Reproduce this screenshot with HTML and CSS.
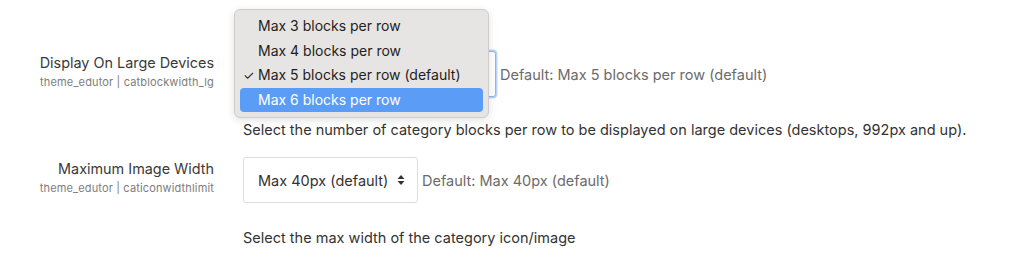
FILE: index.html
```html
<!DOCTYPE html>
<html>
<head>
<meta charset="utf-8">
<link rel="stylesheet" href="styles.css">
</head>
<body>
<div class="page">
  <div class="setting">
    <div class="label">
      <div class="title">Display On Large Devices</div>
      <div class="key">theme_edutor | catblockwidth_lg</div>
    </div>
    <div class="content">
      <div class="control">
        <div class="select select-lg focused"></div>
        <div class="default">Default: Max 5 blocks per row (default)</div>
      </div>
      <div class="desc">Select the number of category blocks per row to be displayed on large devices (desktops, 992px and up).</div>
    </div>
  </div>
  <div class="setting">
    <div class="label">
      <div class="title">Maximum Image Width</div>
      <div class="key">theme_edutor | caticonwidthlimit</div>
    </div>
    <div class="content">
      <div class="control">
        <div class="select select-sm">
          <span>Max 40px (default)</span>
          <svg class="arrows" width="8" height="12" viewBox="0 0 8 12"><path d="M4 1 L7.5 5 H0.5 Z M4 11 L0.5 7 H7.5 Z" fill="#333"/></svg>
        </div>
        <div class="default">Default: Max 40px (default)</div>
      </div>
      <div class="desc desc-2">Select the max width of the category icon/image</div>
    </div>
  </div>
  <div class="menu">
    <div class="item">Max 3 blocks per row</div>
    <div class="item">Max 4 blocks per row</div>
    <div class="item"><span class="check">✓</span>Max 5 blocks per row (default)</div>
    <div class="item active">Max 6 blocks per row</div>
  </div>
</div>
</body>
</html>
```
FILE: styles.css
```css
html, body {
  margin: 0;
  padding: 0;
  background: #fff;
}
.page {
  position: relative;
  width: 1024px;
  height: 265px;
  padding-top: 51px;
  box-sizing: border-box;
  font-family: "Inter", "Liberation Sans", sans-serif;
  color: #333;
}
.setting {
  display: grid;
  grid-template-columns: 214px 1fr;
  column-gap: 29px;
  height: 106px;
}
.label {
  text-align: right;
  padding-top: 2px;
}
.title {
  font-size: 14.4px;
  line-height: 19px;
  color: #3a3a3a;
}
.key {
  font-size: 11px;
  line-height: 14px;
  margin-top: 3px;
  letter-spacing: 0.15px;
  color: #7d7d7d;
}
.content {
  display: flex;
  flex-direction: column;
}
.control {
  display: flex;
  align-items: center;
  gap: 4px;
}
.select {
  box-sizing: border-box;
  height: 46px;
  border: 1px solid #dedede;
  border-radius: 3px;
  background: #fff;
  display: flex;
  align-items: center;
  padding: 0 12px 0 14px;
  font-size: 14.5px;
  color: #333;
}
.select-lg {
  width: 253px;
}
.select.focused {
  border-color: #8db6f5;
  box-shadow: 0 0 0 1.5px #bcd6fb;
}
.select-sm {
  width: 175px;
  justify-content: space-between;
}
.arrows {
  display: block;
}
.default {
  font-size: 14.5px;
  color: #6b6b6b;
}
.desc {
  margin-top: 24px;
  font-size: 14.5px;
  line-height: 18px;
  color: #333;
}
.desc-2 {
  margin-top: 26px;
}
.menu {
  position: absolute;
  left: 234px;
  top: 9px;
  width: 255px;
  box-sizing: border-box;
  padding: 4px 5px 5px;
  background: #e7e5e3;
  border: 1px solid #cfcdcb;
  border-radius: 6px;
  box-shadow: 0 2px 8px rgba(0,0,0,0.12);
  font-family: "Inter", "Liberation Sans", sans-serif;
  font-size: 14px;
  color: #1e1e1e;
}
.item {
  position: relative;
  height: 24.5px;
  line-height: 24.5px;
  padding-left: 18px;
  border-radius: 4px;
}
.item.active {
  background: #5b9cf7;
  color: #fff;
}
.check {
  position: absolute;
  left: 3px;
  font-size: 13px;
}
```
